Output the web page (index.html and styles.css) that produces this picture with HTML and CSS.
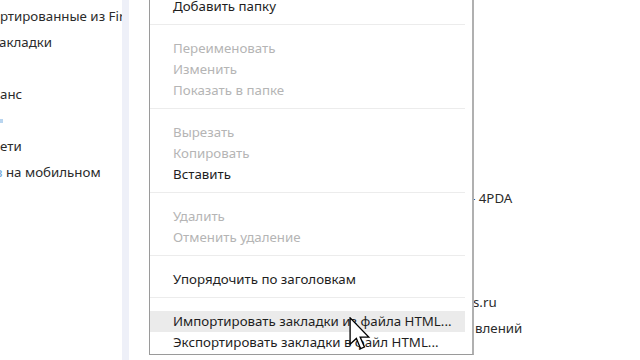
FILE: index.html
```html
<!DOCTYPE html>
<html lang="ru">
<head>
<meta charset="utf-8">
<link rel="stylesheet" href="styles.css">
</head>
<body>
<div class="page">
  <aside class="sidebar">
    <ul class="tree">
      <li class="row"><span class="clip c1">ортированные из Firefox</span></li>
      <li class="row"><span class="clip c2">акладки</span></li>
      <li class="row"></li>
      <li class="row"><span class="clip c3">анс</span></li>
      <li class="row"><span class="dot"></span></li>
      <li class="row"><span class="clip c3">ети</span></li>
      <li class="row"><span class="blue">в</span> на мобильном</li>
    </ul>
    <div class="strip"></div>
  </aside>
  <main class="main">
    <ul class="list">
      <li class="row"></li><li class="row"></li><li class="row"></li><li class="row"></li>
      <li class="row"></li><li class="row"></li><li class="row"></li>
      <li class="row"><span class="pda">- 4PDA</span></li>
      <li class="row"></li><li class="row"></li><li class="row"></li>
      <li class="row"><span class="cut">s.ru</span></li>
      <li class="row">влений</li>
    </ul>
  </main>
</div>

<div class="menu">
  <div class="item">Добавить папку</div>
  <div class="sep"></div>
  <div class="item off">Переименовать</div>
  <div class="item off">Изменить</div>
  <div class="item off">Показать в папке</div>
  <div class="sep"></div>
  <div class="item off">Вырезать</div>
  <div class="item off">Копировать</div>
  <div class="item">Вставить</div>
  <div class="sep"></div>
  <div class="item off">Удалить</div>
  <div class="item off">Отменить удаление</div>
  <div class="sep"></div>
  <div class="item">Упорядочить по заголовкам</div>
  <div class="sep"></div>
  <div class="item hover">Импортировать закладки из файла HTML...</div>
  <div class="item">Экспортировать закладки в файл HTML...</div>
</div>

<svg class="cursor" width="22" height="33" viewBox="0 0 13 20">
  <path d="M0.5 0.5 L0.5 16.5 L4.3 13 L6.9 19.2 L9.2 18.2 L6.6 12.2 L11.8 12.2 Z" fill="#fff" stroke="#000" stroke-width="0.8" stroke-linejoin="miter"/>
</svg>
</body>
</html>
```
FILE: styles.css
```css
html, body {
  margin: 0;
  padding: 0;
  background: #fff;
}
body {
  width: 640px;
  height: 360px;
  overflow: hidden;
  position: relative;
  font-family: "Noto Sans", "Open Sans", sans-serif;
  font-size: 13.3px;
  color: #2b2b2b;
}
.page {
  display: flex;
  height: 360px;
}
.sidebar {
  display: flex;
  width: 129px;
  flex: none;
}
.tree, .list {
  list-style: none;
  margin: 0;
  padding: 3px 0 0;
}
.tree {
  width: 122px;
  overflow: hidden;
}
.row {
  height: 26px;
  line-height: 26px;
  white-space: nowrap;
}
.c1 { margin-left: -8px; }
.c2 { margin-left: -1px; }
.blue { color: #6fa6d9; margin-left: -5px; }
.dot {
  display: inline-block;
  width: 3px;
  height: 4px;
  background: #b9d5ef;
  vertical-align: middle;
}
.strip {
  width: 7px;
  background: #eef0f8;
}
.main {
  flex: 1;
  padding-left: 346px;
}
.pda { margin-left: -4px; }
.cut { margin-left: -2px; }

.menu {
  position: absolute;
  left: 149px;
  top: -4px;
  width: 325px;
  height: 359px;
  box-sizing: border-box;
  background: #fff;
  border-left: 1px solid #9a9a9a;
  border-bottom: 1px solid #9a9a9a;
  border-right: 2px solid #b0b0b0;
}
.item {
  height: 21px;
  line-height: 21px;
  padding-left: 23px;
  margin-right: 7px;
  color: #1e1e1e;
  white-space: nowrap;
}
.item.off { color: #b5b5b5; }
.item.hover { background: #ebebeb; }
.sep {
  height: 1px;
  margin: 7px 7px 13px 0;
  background: #ececec;
}
.cursor {
  position: absolute;
  left: 349px;
  top: 317px;
}
```
